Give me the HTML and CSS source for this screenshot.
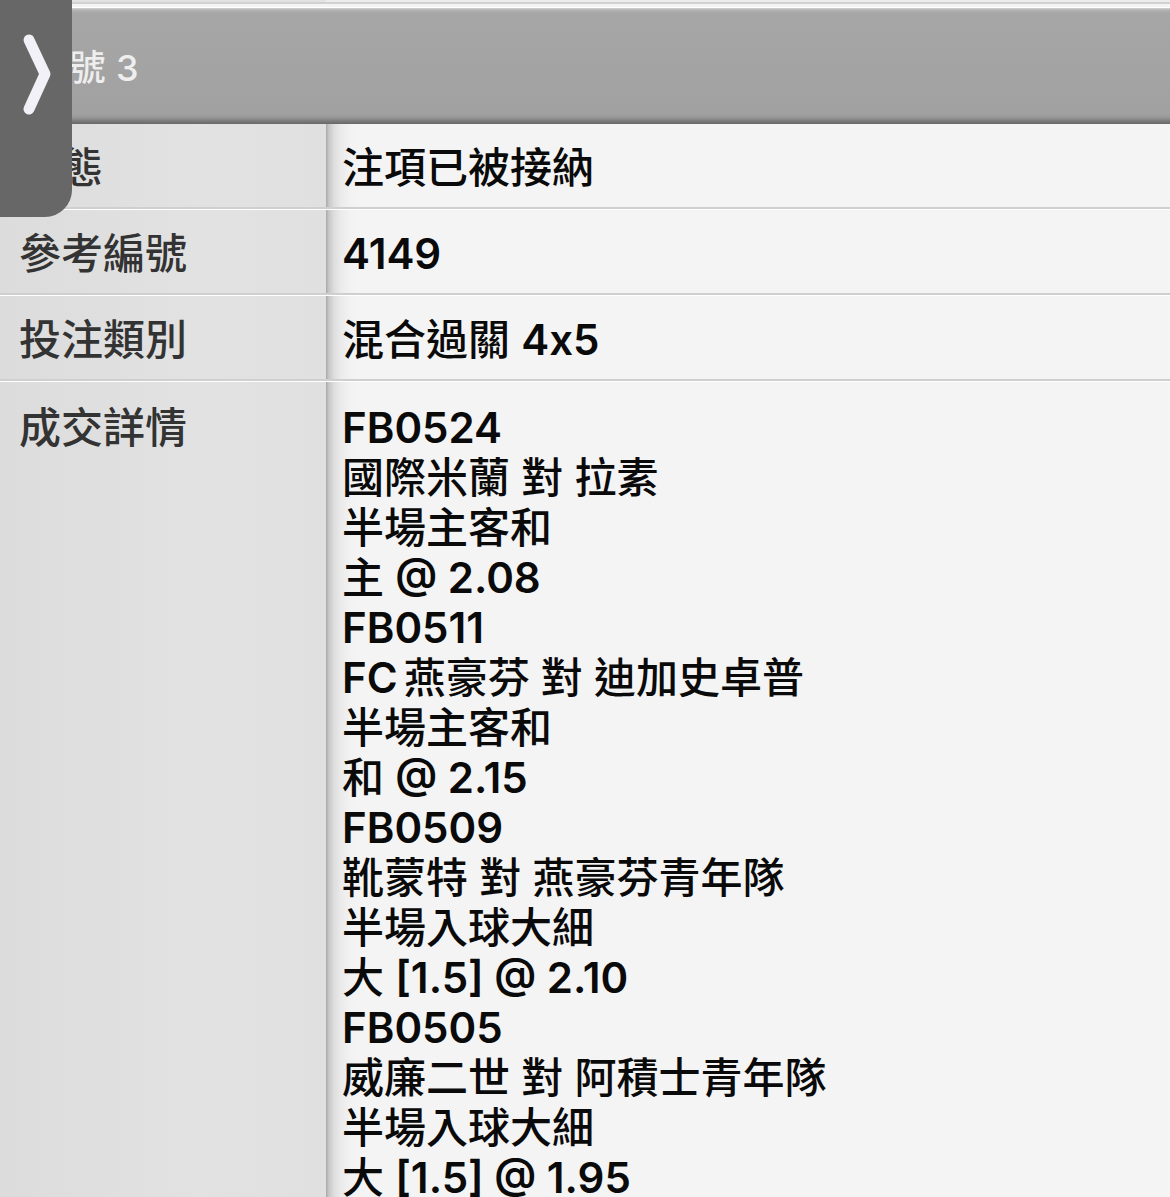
FILE: index.html
```html
<!DOCTYPE html>
<html lang="zh-Hant">
<head>
<meta charset="utf-8">
<title>注項詳情</title>
<link rel="stylesheet" href="styles.css">
</head>
<body>
<div class="screen">
  <div class="prev-row">
    <div class="prev-left"></div>
    <div class="prev-right"></div>
  </div>
  <div class="header"><span class="header-title">編號 3</span></div>
  <div class="table">
    <div class="row">
      <div class="label">狀態</div>
      <div class="value">注項已被接納</div>
    </div>
    <div class="row">
      <div class="label">參考編號</div>
      <div class="value"><span class="lat">4149</span></div>
    </div>
    <div class="row">
      <div class="label">投注類別</div>
      <div class="value">混合過關 <span class="lat">4x5</span></div>
    </div>
    <div class="row row-last">
      <div class="label">成交詳情</div>
      <div class="value">
        <div class="lat">FB0524</div>
        <div>國際米蘭 對 拉素</div>
        <div>半場主客和</div>
        <div>主 <span class="lat">@ 2.08</span></div>
        <div class="lat">FB0511</div>
        <div><span class="lat">FC</span><span class="gap"></span>燕豪芬 對 迪加史卓普</div>
        <div>半場主客和</div>
        <div>和 <span class="lat">@ 2.15</span></div>
        <div class="lat">FB0509</div>
        <div>靴蒙特 對 燕豪芬青年隊</div>
        <div>半場入球大細</div>
        <div>大 <span class="lat">[1.5] @ 2.10</span></div>
        <div class="lat">FB0505</div>
        <div>威廉二世 對 阿積士青年隊</div>
        <div>半場入球大細</div>
        <div>大 <span class="lat">[1.5] @ 1.95</span></div>
      </div>
    </div>
  </div>
  <div class="side-tab">
    <svg class="chevron" width="72" height="150" viewBox="0 0 72 150">
      <polyline points="29,40 45,74 29,109" fill="none" stroke="#f1f1f7" stroke-width="11" stroke-linecap="round" stroke-linejoin="round"/>
    </svg>
  </div>
</div>
</body>
</html>
```

FILE: styles.css
```css
html, body {
  margin: 0;
  padding: 0;
  overflow: hidden;
  background: #f4f4f4;
}

.screen {
  position: relative;
  width: 1170px;
  height: 1197px;
  overflow: hidden;
  font-family: "Inter", "Noto Sans CJK TC", sans-serif;
  font-weight: 500;
}

.prev-row {
  display: grid;
  grid-template-columns: 326px 1fr;
  height: 2px;
  border-bottom: 2px solid #d1d1d1;
}

.prev-left {
  background: #e2e2e2;
}

.prev-right {
  background: #ececec;
}

.header {
  margin-top: 3px;
  height: 117px;
  box-sizing: border-box;
  border-top: 1px solid #ffffff;
  background: linear-gradient(to bottom,
    #d2d2d2 0px,
    #b4b4b4 2px,
    #a6a6a6 5px,
    #a1a1a1 106px,
    #959595 110px,
    #7a7a7a 113px,
    #686868 116px);
  display: flex;
  align-items: center;
  padding-left: 33px;
  padding-bottom: 3px;
}

.header-title {
  color: #eeeeee;
  font-size: 36px;
  font-weight: 500;
  letter-spacing: 0.5px;
}

.table {
  display: flex;
  flex-direction: column;
}

.row {
  display: grid;
  grid-template-columns: 326px 1fr;
  border-bottom: 2px solid #cfcfcf;
}

.row + .row {
  border-top: 1px solid #ffffff;
}

.row-last {
  border-bottom: none;
}

.label,
.value {
  font-size: 42px;
  line-height: 50px;
  padding: 19px 0 14px;
}

.label {
  padding-left: 19px;
  color: #333333;
  font-weight: 500;
  background: linear-gradient(to right, #dcdcdc 0%, #e2e2e2 60%, #e0e0e0 100%);
}

.value {
  padding-left: 16px;
  color: #0a0a0a;
  font-weight: 500;
  background: linear-gradient(to right,
    #a9a9a9 0px,
    #c8c8c8 3px,
    #dddddd 8px,
    #ebebeb 15px,
    #f2f2f2 24px,
    #f4f4f4 34px);
}

.lat {
  font-weight: 600;
}

.gap {
  display: inline-block;
  width: 6px;
}

.row-last .label,
.row-last .value {
  padding-top: 21px;
  height: 900px;
}

.side-tab {
  position: absolute;
  top: 0;
  left: 0;
  width: 72px;
  height: 217px;
  background: #676767;
  border-bottom-right-radius: 27px;
}

.chevron {
  display: block;
}
```
